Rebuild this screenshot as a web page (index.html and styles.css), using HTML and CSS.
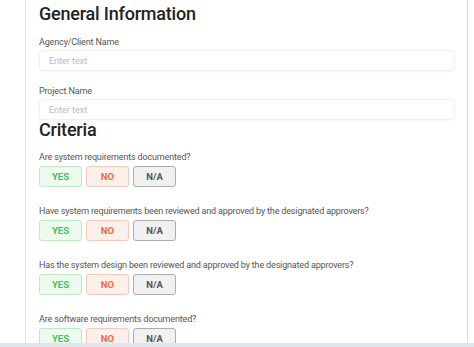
FILE: index.html
```html
<!DOCTYPE html>
<html lang="en">
<head>
  <meta charset="UTF-8">
  <title>Checklist</title>
  <meta name="viewport" content="width=device-width, initial-scale=1">
  <link rel="stylesheet" href="styles.css">
</head>
<body>
  <div class="viewport">
    <div class="panel">
      <h2>General Information</h2>
      <div class="field">
        <label for="agency">Agency/Client Name</label>
        <input type="text" id="agency" placeholder="Enter text">
      </div>
      <div class="field">
        <label for="project">Project Name</label>
        <input type="text" id="project" placeholder="Enter text">
      </div>
      <h2 class="criteria">Criteria</h2>
      <div class="question">
        <p>Are system requirements documented?</p>
        <div class="choices">
          <button class="yes">YES</button>
          <button class="no">NO</button>
          <button class="na">N/A</button>
        </div>
      </div>
      <div class="question">
        <p>Have system requirements been reviewed and approved by the designated approvers?</p>
        <div class="choices">
          <button class="yes">YES</button>
          <button class="no">NO</button>
          <button class="na">N/A</button>
        </div>
      </div>
      <div class="question">
        <p>Has the system design been reviewed and approved by the designated approvers?</p>
        <div class="choices">
          <button class="yes">YES</button>
          <button class="no">NO</button>
          <button class="na">N/A</button>
        </div>
      </div>
      <div class="question">
        <p>Are software requirements documented?</p>
        <div class="choices">
          <button class="yes">YES</button>
          <button class="no">NO</button>
          <button class="na">N/A</button>
        </div>
      </div>
    </div>
  </div>
  <div class="bottombar"></div>
</body>
</html>
```

FILE: styles.css
```css
html, body { margin:0; height:100%; }
body { font-family: Roboto, "Liberation Sans", sans-serif; background:#fff; color:#333; display:flex; flex-direction:column; overflow:hidden; }
.viewport { flex:1; overflow:hidden; padding-left:25px; }
.panel { width:416px; border-left:1px solid #e6e6e6; border-right:1px solid #dcdcdc; padding:0 12px 0 13px; min-height:100%; }
h2 { font-size:18px; font-weight:500; color:#222; margin:0; padding-top:3px; line-height:22px; letter-spacing:-0.2px; }
.field { margin-top:11px; }
.field + .field { margin-top:14px; }
label { display:block; font-size:9px; color:#555; line-height:12px; margin-bottom:2px; letter-spacing:-0.15px; }
input { box-sizing:border-box; display:block; width:100%; height:21px; border:1px solid #f0f0f0; border-radius:4px; padding:0 9px; font-family:inherit; font-size:9px; color:#333; box-shadow:0 1px 2px rgba(0,0,0,0.04); }
input::placeholder { color:#b8bbc2; }
h2.criteria { padding-top:0; margin-top:-1px; }
.question { margin-top:10px; }
.question + .question { margin-top:18px; }
.question p { font-size:9px; color:#555; margin:0 0 3px; line-height:12px; letter-spacing:-0.16px; }
.choices { display:flex; gap:4px; }
.choices button { width:43px; height:21px; border-radius:3px; font-family:inherit; font-size:9.5px; font-weight:700; border-width:1px; border-style:solid; padding:0; }
.choices .yes { background:#edfbee; border-color:#bfe8c5; color:#43c25e; }
.choices .no { background:#fdf0eb; border-color:#f5c9ba; color:#ef6a3d; }
.choices .na { background:#f1f1f1; border-color:#adadad; color:#555; }
.bottombar { height:4px; background:#dfe4ee; }
```
